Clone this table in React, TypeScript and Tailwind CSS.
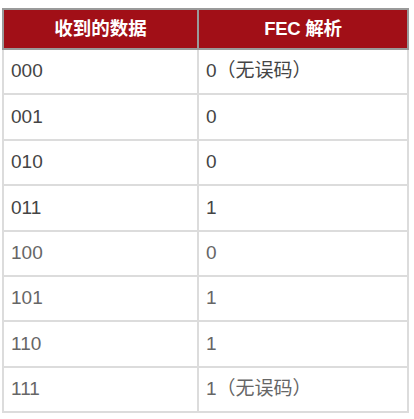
import React from "react";

const rows = [
  { input: "000", fec: "0（无误码）", tone: "text-[#444]" },
  { input: "001", fec: "0", tone: "text-[#444]" },
  { input: "010", fec: "0", tone: "text-[#444]" },
  { input: "011", fec: "1", tone: "text-[#444]" },
  { input: "100", fec: "0", tone: "text-[#666]" },
  { input: "101", fec: "1", tone: "text-[#666]" },
  { input: "110", fec: "1", tone: "text-[#666]" },
  { input: "111", fec: "1（无误码）", tone: "text-[#666]" },
];

export default function App() {
  return (
    <div className="min-h-screen bg-white pt-[8px] pl-[2px]">
      <table
        className="w-[407px] border-collapse table-fixed"
        style={{ fontFamily: '"Liberation Sans", "Noto Sans CJK SC", sans-serif' }}
      >
        <thead>
          <tr className="h-[40px]">
            <th className="w-[195px] border-2 border-[#9a9a9a] bg-[#a10f17] text-center text-[18.5px] font-bold text-white">
              收到的数据
            </th>
            <th className="border-2 border-[#9a9a9a] bg-[#a10f17] text-center text-[18.5px] font-bold tracking-[-0.3px] text-white">
              FEC 解析
            </th>
          </tr>
        </thead>
        <tbody>
          {rows.map((r) => (
            <tr key={r.input} className="h-[45.4px]">
              <td className={`border-2 border-[#dcdcdc] pl-[7px] text-[19px] ${r.tone}`}>{r.input}</td>
              <td className={`border-2 border-[#dcdcdc] pl-[7px] text-[19px] ${r.tone}`}>{r.fec}</td>
            </tr>
          ))}
        </tbody>
      </table>
    </div>
  );
}
